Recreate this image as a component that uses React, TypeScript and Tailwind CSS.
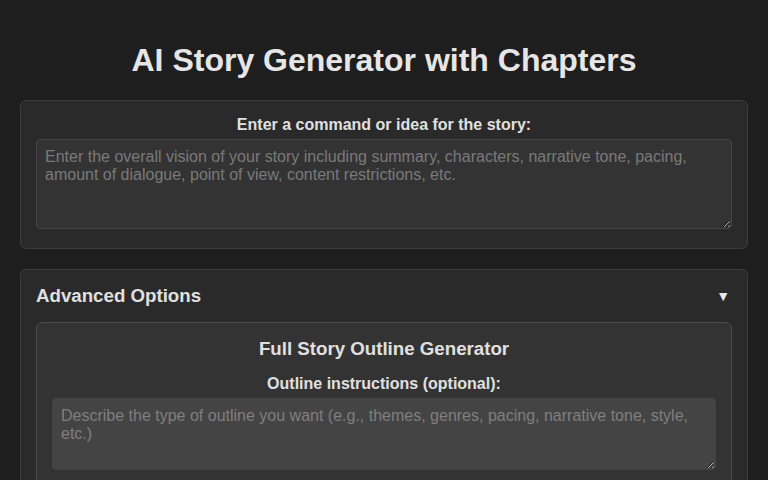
const App = () => {
  return (
    <div className="min-h-screen bg-[#1e1e1e] px-5 pt-5 pb-10 text-[#e0e0e0] font-['Liberation_Sans',Arial,sans-serif]">
      <h1 className="text-center text-[32px] leading-[37px] font-bold text-[#e6e6e6] mt-[22px] mb-[21px]">
        AI Story Generator with Chapters
      </h1>

      {/* Story idea */}
      <div className="bg-[#2a2a2a] border border-[#3c3c3c] rounded-[6px] px-[15px] pt-[15px] pb-[19px]">
        <label className="block text-center text-base leading-[18px] font-bold text-[#e0e0e0] mb-[5px]">
          Enter a command or idea for the story:
        </label>
        <textarea
          className="block w-full h-[90px] bg-[#333333] border border-[#464646] rounded-[4px] px-2 py-2 text-base leading-[18px] text-[#e0e0e0] placeholder:text-[#7a7a7a] outline-none"
          placeholder="Enter the overall vision of your story including summary, characters, narrative tone, pacing, amount of dialogue, point of view, content restrictions, etc."
        />
      </div>

      {/* Advanced options */}
      <div className="mt-5 bg-[#2a2a2a] border border-[#3c3c3c] rounded-[6px] px-[15px] pt-[15px] pb-[15px]">
        <div className="flex items-center justify-between">
          <h3 className="text-[18.7px] leading-[21px] font-bold text-[#e0e0e0]">Advanced Options</h3>
          <span className="text-[14px] leading-none text-[#e8e8e8] mr-[2px]">▼</span>
        </div>

        <div className="mt-4 bg-[#333333] border border-[#4a4a4a] rounded-[6px] px-[15px] pt-[15px] pb-[15px]">
          <h3 className="text-center text-[18.7px] leading-[21px] font-bold text-[#e0e0e0] mb-4">
            Full Story Outline Generator
          </h3>
          <label className="block text-center text-base leading-[18px] font-bold text-[#e0e0e0] mb-[5px]">
            Outline instructions (optional):
          </label>
          <textarea
            className="block w-full h-[72px] bg-[#444444] border border-[#444444] rounded-[4px] px-2 py-2 text-base leading-[18px] text-[#e0e0e0] placeholder:text-[#7f7f7f] outline-none"
            placeholder="Describe the type of outline you want (e.g., themes, genres, pacing, narrative tone, style, etc.)"
          />
        </div>
      </div>
    </div>
  );
};

export default App;
